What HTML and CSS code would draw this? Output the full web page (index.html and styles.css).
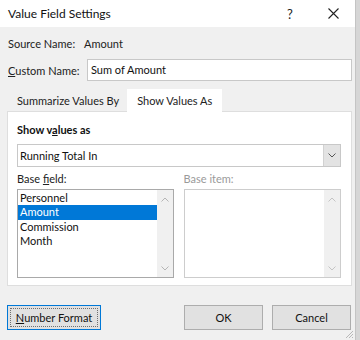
FILE: index.html
```html
<!DOCTYPE html>
<html lang="en">
<head>
    <meta charset="UTF-8">
    <title>Value Field Settings</title>
    <link rel="stylesheet" href="styles.css">
</head>
<body>

    <div class="dialog">
        <div class="titlebar">
            <span class="title">Value Field Settings</span>
            <span class="help">?</span>
            <span class="close">
                <svg width="11" height="11" viewBox="0 0 11 11"><path d="M0.5 0.5 L10.5 10.5 M10.5 0.5 L0.5 10.5" stroke="#222" stroke-width="1.1" fill="none"/></svg>
            </span>
        </div>

        <div class="content">
            <div class="row source-row">
                <span class="field-label">Source Name:</span>
                <span class="source-value">Amount</span>
            </div>

            <div class="row custom-row">
                <label class="field-label" for="customName"><u>C</u>ustom Name:</label>
                <input type="text" id="customName" class="text-input" value="Sum of Amount">
            </div>

            <div class="tabs">
                <div class="tab">Summarize Values By</div>
                <div class="tab active">Show Values As</div>
            </div>

            <div class="panel">
                <div class="section-title">Show v<u>a</u>lues as</div>
                <div class="dropdown">
                    <span class="dropdown-text">Running Total In</span>
                    <span class="dropdown-btn">
                        <svg width="8" height="5" viewBox="0 0 8 5"><path d="M0.5 0.5 L4 4 L7.5 0.5" stroke="#555" stroke-width="1" fill="none"/></svg>
                    </span>
                </div>

                <div class="lists">
                    <div class="list-col">
                        <div class="list-label">Base <u>f</u>ield:</div>
                        <div class="listbox">
                            <ul class="items">
                                <li>Personnel</li>
                                <li class="selected">Amount</li>
                                <li>Commission</li>
                                <li>Month</li>
                            </ul>
                            <div class="scrollbar">
                                <svg width="8" height="5" viewBox="0 0 8 5"><path d="M0.5 4.5 L4 1 L7.5 4.5" stroke="#b5b5b5" stroke-width="1" fill="none"/></svg>
                                <svg width="8" height="5" viewBox="0 0 8 5"><path d="M0.5 0.5 L4 4 L7.5 0.5" stroke="#b5b5b5" stroke-width="1" fill="none"/></svg>
                            </div>
                        </div>
                    </div>
                    <div class="list-col disabled">
                        <div class="list-label">Base item:</div>
                        <div class="listbox">
                            <ul class="items"></ul>
                            <div class="scrollbar">
                                <svg width="8" height="5" viewBox="0 0 8 5"><path d="M0.5 4.5 L4 1 L7.5 4.5" stroke="#c4c4c4" stroke-width="1" fill="none"/></svg>
                                <svg width="8" height="5" viewBox="0 0 8 5"><path d="M0.5 0.5 L4 4 L7.5 0.5" stroke="#c4c4c4" stroke-width="1" fill="none"/></svg>
                            </div>
                        </div>
                    </div>
                </div>
            </div>

            <div class="buttons">
                <button class="btn btn-focus"><span class="focus-ring"><u>N</u>umber Format</span></button>
                <div class="btn-group">
                    <button class="btn">OK</button>
                    <button class="btn">Cancel</button>
                </div>
            </div>
        </div>

        <svg class="grip" width="9" height="9" viewBox="0 0 9 9"><path d="M8 1 L1 8 M8 4 L4 8 M8 7 L7 8" stroke="#b8b8b8" stroke-width="1" fill="none"/></svg>
    </div>

</body>
</html>
```

FILE: styles.css
```css
* {
    margin: 0;
    padding: 0;
    box-sizing: border-box;
    font-family: 'Lato', 'Open Sans', sans-serif;
    white-space: nowrap;
}

body {
    background: #d6d6d6;
    width: 360px;
    height: 340px;
    overflow: hidden;
}

.dialog {
    position: relative;
    width: 356px;
    height: 340px;
    background: #f0f0f0;
    border-right: 1px solid #c4c4c4;
}

.titlebar {
    height: 27px;
    background: white;
    display: flex;
    align-items: center;
    padding-left: 8px;
}

.title {
    font-size: 12px;
    color: #111;
    flex: 1;
}

.help {
    font-size: 13px;
    color: #222;
    width: 41px;
}

.close {
    width: 27px;
    display: flex;
    padding-bottom: 1px;
}

.content {
    padding: 0 3px 0 7px;
}

.row {
    display: flex;
    align-items: center;
    font-size: 11px;
    color: #222;
}

.source-row {
    margin-top: 7px;
    height: 18px;
    padding-left: 1px;
}

.source-value {
    margin-left: -3px;
}

.custom-row {
    margin-top: 7px;
    padding-left: 1px;
}

.field-label {
    width: 79px;
    flex-shrink: 0;
}

.text-input {
    flex: 1;
    height: 22px;
    border: 1px solid #c8c8c8;
    background: white;
    font-size: 11px;
    padding: 0 0 2px 3px;
    color: #111;
    outline: none;
}

.tabs {
    display: flex;
    margin-top: 8px;
    height: 23px;
    align-items: flex-end;
    position: relative;
    z-index: 1;
}

.tab {
    height: 22px;
    display: flex;
    align-items: center;
    font-size: 11px;
    color: #222;
    padding: 0 9px 2px 10px;
}

.tab.active {
    height: 23px;
    background: white;
    padding: 0 10px 0 10px;
    margin-left: -1px;
}

.panel {
    background: white;
    border: 1px solid #dedede;
    margin-top: -1px;
    height: 175px;
    padding: 9px 10px 0 9px;
}

.section-title {
    font-size: 11px;
    font-weight: 700;
    color: #111;
    height: 16px;
    line-height: 16px;
    margin-top: 1px;
}

.dropdown {
    margin-top: 6px;
    height: 23px;
    border: 1px solid #c8c8c8;
    display: flex;
    align-items: center;
    background: white;
}

.dropdown-text {
    flex: 1;
    font-size: 11px;
    padding-left: 2px;
    padding-bottom: 1px;
    color: #111;
}

.dropdown-btn {
    width: 17px;
    height: 21px;
    background: #e3e3e3;
    border-left: 1px solid #d2d2d2;
    display: flex;
    align-items: center;
    justify-content: center;
}

.lists {
    display: flex;
    gap: 10px;
    margin-top: 3px;
}

.list-col {
    width: 157px;
}

.list-col.disabled {
    width: 158px;
}

.list-label {
    font-size: 11px;
    color: #222;
    height: 17px;
    line-height: 17px;
    margin-bottom: 2px;
}

.disabled .list-label {
    color: #9a9a9a;
}

.listbox {
    height: 89px;
    border: 1px solid #a9a9a9;
    display: flex;
    background: white;
}

.disabled .listbox {
    border-color: #cdcdcd;
}

.items {
    list-style: none;
    flex: 1;
    padding-top: 1px;
}

.items li {
    font-size: 11px;
    color: #111;
    height: 14.3px;
    line-height: 14px;
    padding-left: 2px;
}

.items li.selected {
    background: #0078d7;
    color: white;
}

.scrollbar {
    width: 16px;
    background: #f0f0f0;
    display: flex;
    flex-direction: column;
    justify-content: space-between;
    align-items: center;
    padding: 7px 0 6px;
}

.buttons {
    display: flex;
    justify-content: space-between;
    margin-top: 19px;
}

.btn {
    width: 79px;
    height: 25px;
    background: #e1e1e1;
    border: 1px solid #adadad;
    font-size: 11px;
    color: #111;
}

.btn-focus {
    width: 94px;
    border: 1px solid #0078d7;
    background: #e1e1e1;
    padding: 2px;
    display: flex;
}

.focus-ring {
    flex: 1;
    border: 1px dotted #6f6f6f;
    display: flex;
    align-items: center;
    justify-content: center;
    font-size: 11px;
}

.btn-group {
    display: flex;
    gap: 9px;
    margin-right: 1px;
}

.grip {
    position: absolute;
    right: 1px;
    bottom: 1px;
}
```
